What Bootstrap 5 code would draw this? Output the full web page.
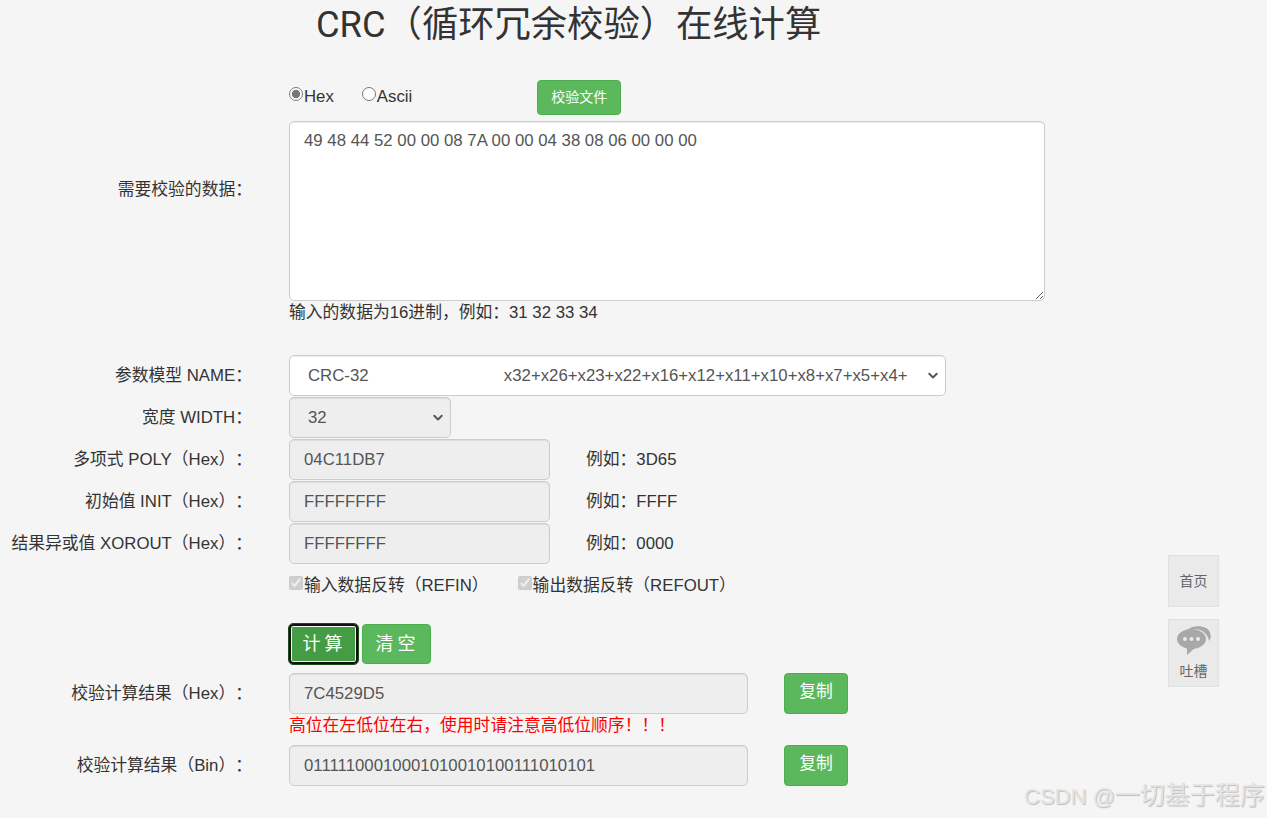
<!DOCTYPE html>
<html lang="zh-CN">
<head>
<meta charset="utf-8">
<title>CRC</title>
<link href="https://cdn.jsdelivr.net/npm/bootstrap@5.3.0/dist/css/bootstrap.min.css" rel="stylesheet">
<style>
html,body{height:100%;overflow:hidden}
body{background:#f5f5f5;color:#333;font-family:"Liberation Sans","Noto Sans CJK SC",sans-serif;font-size:16.8px;line-height:20px;position:relative;text-spacing-trim:space-all;font-feature-settings:"chws" 0}
.page-title{font-family:Roboto,"Noto Sans CJK SC",sans-serif;font-size:36.3px;font-weight:400;line-height:50px;margin:0;padding:0 0 0 316px;height:80px;color:#333}
.row-line{display:flex;align-items:center;margin-bottom:1px}
.lbl{width:252px;flex:none;text-align:right;margin-right:37px;white-space:nowrap}
.form-control,.form-select{font-size:16.8px;line-height:20px;color:#555;border:1px solid #ccc;border-radius:5px;box-shadow:inset 0 1px 1px rgba(0,0,0,.075);height:41px;padding:6px 14px}
.form-control:disabled,.form-select:disabled{background-color:#eee;opacity:1}
.form-select{padding-left:18px;padding-right:38px;background-position:right 4px center;background-size:16px 12px;background-image:url("data:image/svg+xml,%3csvg xmlns='http://www.w3.org/2000/svg' viewBox='0 0 16 16'%3e%3cpath fill='none' stroke='%23555' stroke-linecap='round' stroke-linejoin='round' stroke-width='2.6' d='m3 5 5 5 5-5'/%3e%3c/svg%3e")}
.source-box{width:756px;height:180px;padding:9px 14px;resize:vertical;min-height:180px}
.w-name{width:657px;background-color:#fff}
.w-width{width:162px}
.w-short{width:261px}
.w-long{width:459px}
.hint{margin-left:36px}
.btn-green{background:#5cb85c;border:1px solid #4cae4c;color:#fff;border-radius:4px;font-size:16.8px;line-height:20px}
.btn-green:hover{background:#5cb85c;color:#fff;border-color:#4cae4c}
.btn-file{width:84px;height:35px;font-size:14px;padding:0 0 2px;margin-left:125px}
.btn-copy{width:64px;height:41px;padding:0 0 3px;margin-left:36px}
.btn-calc{width:69px;height:40px;padding:0 0 0 2px;font-size:18px;letter-spacing:4px}
.btn-calc.pressed{background:#449d44;box-shadow:0 0 0 1px #f5f5f5 inset;border:2px solid #111;outline:1px solid #1c4a1c;outline-offset:0}
.btn-clear{margin-left:4px}
.native{margin:0 1px 0 0;width:14px;height:14px;flex:none;accent-color:#777}
.top-opts{height:35px;margin:0 0 6px 289px;display:flex}
.opt{display:inline-flex;align-items:flex-start;height:22px;padding-top:7px}
.opt-gap{margin-left:28px}
.under{margin:2px 0 0 289px;height:21px}
.gap1{height:31px}
.check-line{height:42px;margin-left:289px;display:flex;align-items:center}
.check-line label{display:inline-flex;align-items:center}
.check-line input{align-self:flex-start;margin-top:0}
.check-gap{margin-left:29px}
.run-line{margin:17px 0 9px 289px}
.warn{color:#f00;margin:2px 0 0 289px;height:29px;line-height:20px}
.lbl-top{align-self:flex-start;padding-top:59px}
.float-tile{position:absolute;left:1168px;width:51px;background:#eaeaea;border:1px solid #e1e1e1;color:#666;font-size:14px;text-align:center}
.tile-home{top:555px;height:52px;line-height:50px}
.tile-talk{top:619px;height:68px;padding-top:6px}
.tile-talk svg{display:block;margin:0 auto}
.tile-talk span{display:block;line-height:16px;margin-top:7px}
.wm{position:absolute;left:1024px;top:781px;font-size:25px;line-height:28px;color:#e4e4e4;text-shadow:1px 1px 1px #bcbcbc;white-space:nowrap}
.wm-latin{font-size:22px}
</style>
</head>
<body>
<h1 class="page-title">CRC（循环冗余校验）在线计算</h1>

<div class="top-opts">
  <label class="opt"><input class="native" type="radio" name="fmt" checked><span>Hex</span></label>
  <label class="opt opt-gap"><input class="native" type="radio" name="fmt"><span>Ascii</span></label>
  <button type="button" class="btn btn-green btn-file">校验文件</button>
</div>

<div class="row-line">
  <div class="lbl lbl-top">需要校验的数据：</div>
  <textarea class="form-control source-box">49 48 44 52 00 00 08 7A 00 00 04 38 08 06 00 00 00</textarea>
</div>
<div class="under">输入的数据为16进制，例如：31 32 33 34</div>
<div class="gap1"></div>

<div class="row-line">
  <div class="lbl">参数模型 NAME：</div>
  <select class="form-select w-name"><option>CRC-32&nbsp;&nbsp;&nbsp;&nbsp;&nbsp;&nbsp;&nbsp;&nbsp;&nbsp;&nbsp;&nbsp;&nbsp;&nbsp;&nbsp;&nbsp;&nbsp;&nbsp;&nbsp;&nbsp;&nbsp;&nbsp;&nbsp;&nbsp;&nbsp;&nbsp;&nbsp;&nbsp;&nbsp;&nbsp;x32+x26+x23+x22+x16+x12+x11+x10+x8+x7+x5+x4+x2+x+1</option></select>
</div>
<div class="row-line">
  <div class="lbl">宽度 WIDTH：</div>
  <select class="form-select w-width" disabled><option>32</option></select>
</div>
<div class="row-line">
  <div class="lbl">多项式 POLY（Hex）：</div>
  <input class="form-control w-short" disabled value="04C11DB7">
  <div class="hint">例如：3D65</div>
</div>
<div class="row-line">
  <div class="lbl">初始值 INIT（Hex）：</div>
  <input class="form-control w-short" disabled value="FFFFFFFF">
  <div class="hint">例如：FFFF</div>
</div>
<div class="row-line">
  <div class="lbl">结果异或值 XOROUT（Hex）：</div>
  <input class="form-control w-short" disabled value="FFFFFFFF">
  <div class="hint">例如：0000</div>
</div>
<div class="check-line">
  <label><input class="native" type="checkbox" checked disabled>输入数据反转（REFIN）</label>
  <label class="check-gap"><input class="native" type="checkbox" checked disabled>输出数据反转（REFOUT）</label>
</div>
<div class="d-flex run-line">
  <button type="button" class="btn btn-green btn-calc pressed">计算</button>
  <button type="button" class="btn btn-green btn-calc btn-clear">清空</button>
</div>
<div class="row-line">
  <div class="lbl">校验计算结果（Hex）：</div>
  <input class="form-control w-long" disabled value="7C4529D5">
  <button type="button" class="btn btn-green btn-copy">复制</button>
</div>
<div class="warn">高位在左低位在右，使用时请注意高低位顺序！！！</div>
<div class="row-line">
  <div class="lbl">校验计算结果（Bin）：</div>
  <input class="form-control w-long" disabled value="01111100010001010010100111010101">
  <button type="button" class="btn btn-green btn-copy">复制</button>
</div>

<div class="float-tile tile-home">首页</div>
<div class="float-tile tile-talk">
  <svg width="36" height="30" viewBox="0 0 36 30"><path d="M11 4C15 0 24-1 30 2c5 3 6 9 3 13-.5-5-4-9-9-11-4-1.500-9-1-13 0z" fill="#a8a8a8"/><ellipse cx="15.500" cy="13" rx="14.500" ry="10" fill="#a8a8a8"/><path d="M11 21l0 8 8-7z" fill="#a8a8a8"/><circle cx="9" cy="13" r="2" fill="#eaeaea"/><circle cx="15.500" cy="13" r="2" fill="#eaeaea"/><circle cx="22" cy="13" r="2" fill="#eaeaea"/></svg>
  <span>吐槽</span>
</div>
<div class="wm"><span class="wm-latin">CSDN @</span>一切基于程序</div>
<script src="https://cdn.jsdelivr.net/npm/bootstrap@5.3.0/dist/js/bootstrap.bundle.min.js"></script>
</body>
</html>
